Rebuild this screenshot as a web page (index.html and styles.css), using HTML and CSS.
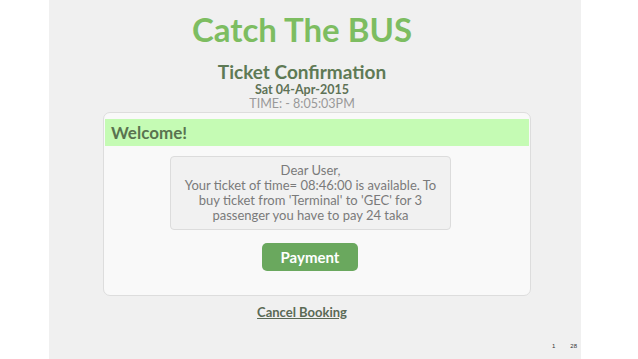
FILE: index.html
```html
<!DOCTYPE html>
<html>
<head>
<meta charset="utf-8">
<link rel="stylesheet" href="styles.css">
</head>
<body>
<div class="page">
  <header class="header">
    <h1 class="brand">Catch The BUS</h1>
    <h2 class="subtitle">Ticket Confirmation</h2>
    <div class="date">Sat 04-Apr-2015</div>
    <div class="time">TIME: - 8:05:03PM</div>
  </header>
  <section class="card">
    <div class="welcome">Welcome!</div>
    <div class="message">
      Dear User,<br>
      Your ticket of time= 08:46:00 is available. To<br>
      buy ticket from 'Terminal' to 'GEC' for 3<br>
      passenger you have to pay 24 taka
    </div>
    <div class="actions"><button class="pay">Payment</button></div>
  </section>
  <div class="cancel-row"><a class="cancel" href="#">Cancel Booking</a></div>
  <footer class="pager"><span>1</span><span>28</span></footer>
</div>
</body>
</html>
```
FILE: styles.css
```css
html, body {
  margin: 0;
  padding: 0;
  background: #ffffff;
}
body {
  font-family: Lato, "Open Sans", sans-serif;
}
.page {
  margin-left: 49px;
  width: 532px;
  height: 359px;
  background: #f0f0f0;
  display: flex;
  flex-direction: column;
}
.header {
  display: flex;
  flex-direction: column;
  align-items: center;
  padding-right: 26px;
}
.brand {
  margin: 9px 0 0;
  font-size: 33px;
  line-height: 40px;
  font-weight: bold;
  color: #7dbd61;
}
.subtitle {
  margin: 12px 0 0;
  font-size: 19px;
  line-height: 22px;
  font-weight: bold;
  color: #5e7a55;
}
.date {
  font-size: 12.5px;
  line-height: 14px;
  font-weight: bold;
  color: #5e7256;
}
.time {
  font-size: 12.5px;
  line-height: 14px;
  color: #999999;
}
.card {
  margin: 1px 0 0 54px;
  width: 428px;
  height: 184px;
  box-sizing: border-box;
  background: #f9f9f9;
  border: 1px solid #dddddd;
  border-radius: 7px;
  padding: 6px 1px 0;
  display: flex;
  flex-direction: column;
  align-items: stretch;
}
.welcome {
  height: 27px;
  background: #c5fbb4;
  color: #5a7350;
  font-size: 17px;
  font-weight: bold;
  line-height: 27px;
  padding-left: 6px;
}
.message {
  align-self: flex-start;
  margin: 10px 0 0 65px;
  width: 281px;
  height: 74px;
  box-sizing: border-box;
  background: #f1f1f1;
  border: 1px solid #dcdcdc;
  border-radius: 4px;
  color: #7a7a7a;
  font-size: 13px;
  line-height: 15px;
  text-align: center;
  padding-top: 6px;
  white-space: nowrap;
}
.actions {
  display: flex;
  justify-content: flex-start;
  padding-left: 157px;
  margin-top: 13px;
}
.pay {
  width: 96px;
  height: 28px;
  border: none;
  border-radius: 5px;
  background: #6aa85e;
  color: #ffffff;
  font-family: Lato, sans-serif;
  font-size: 15px;
  font-weight: bold;
  padding: 0;
}
.cancel-row {
  display: flex;
  justify-content: center;
  padding-right: 26px;
  margin-top: 8px;
}
.cancel {
  color: #5a6a55;
  font-size: 13px;
  font-weight: bold;
  text-decoration: underline;
}
.pager {
  margin-top: auto;
  margin-bottom: 10px;
  display: flex;
  justify-content: flex-end;
  gap: 15px;
  padding-right: 4px;
  font-size: 6px;
  color: #333333;
  font-family: "Liberation Sans", sans-serif;
}
```
